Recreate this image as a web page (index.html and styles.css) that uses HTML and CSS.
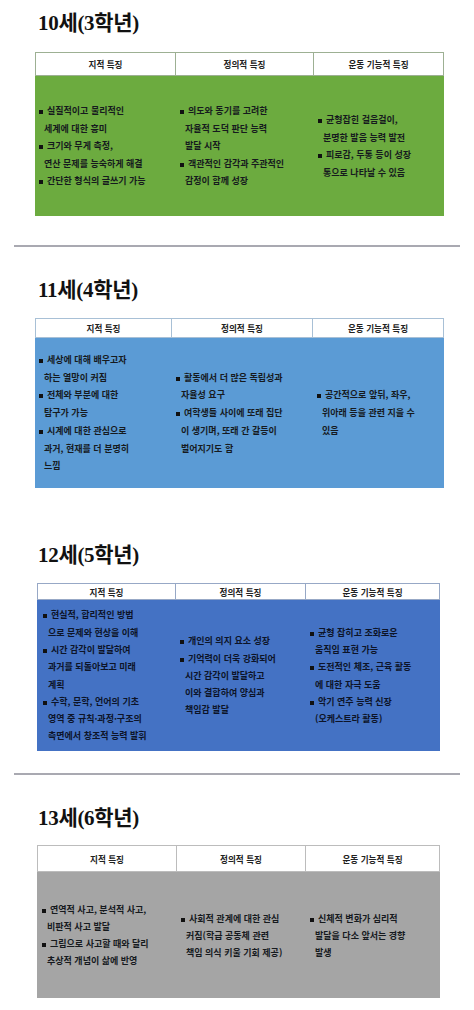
FILE: index.html
```html
<!DOCTYPE html>
<html lang="ko">
<head>
<meta charset="utf-8">
<link rel="stylesheet" href="styles.css">
</head>
<body>
<section class="sec s1">
  <h2 class="title">10세(3학년)</h2>
  <div class="tbl t1">
    <div class="hd">지적 특징</div>
    <div class="hd">정의적 특징</div>
    <div class="hd">운동 기능적 특징</div>
    <div class="cell c1">
      <p class="b">실질적이고 물리적인</p>
      <p class="c">세계에 대한 흥미</p>
      <p class="b">크기와 무게 측정,</p>
      <p class="c">연산 문제를 능숙하게 해결</p>
      <p class="b">간단한 형식의 글쓰기 가능</p>
    </div>
    <div class="cell">
      <p class="b">의도와 동기를 고려한</p>
      <p class="c">자율적 도덕 판단 능력</p>
      <p class="c">발달 시작</p>
      <p class="b">객관적인 감각과 주관적인</p>
      <p class="c">감정이 함께 성장</p>
    </div>
    <div class="cell">
      <p class="b">균형잡힌 걸음걸이,</p>
      <p class="c">분명한 발음 능력 발전</p>
      <p class="b">피로감, 두통 등이 성장</p>
      <p class="c">통으로 나타날 수 있음</p>
    </div>
  </div>
</section>
<hr class="divider d1">
<section class="sec s2">
  <h2 class="title">11세(4학년)</h2>
  <div class="tbl t2">
    <div class="hd">지적 특징</div>
    <div class="hd">정의적 특징</div>
    <div class="hd">운동 기능적 특징</div>
    <div class="cell c1">
      <p class="b">세상에 대해 배우고자</p>
      <p class="c">하는 열망이 커짐</p>
      <p class="b">전체와 부분에 대한</p>
      <p class="c">탐구가 가능</p>
      <p class="b">시계에 대한 관심으로</p>
      <p class="c">과거, 현재를 더 분명히</p>
      <p class="c">느낌</p>
    </div>
    <div class="cell">
      <p class="b">활동에서 더 많은 독립성과</p>
      <p class="c">자율성 요구</p>
      <p class="b">여학생들 사이에 또래 집단</p>
      <p class="c">이 생기며, 또래 간 갈등이</p>
      <p class="c">벌어지기도 함</p>
    </div>
    <div class="cell">
      <p class="b">공간적으로 앞뒤, 좌우,</p>
      <p class="c">위아래 등을 관련 지을 수</p>
      <p class="c">있음</p>
    </div>
  </div>
</section>
<section class="sec s3">
  <h2 class="title">12세(5학년)</h2>
  <div class="tbl t3">
    <div class="hd">지적 특징</div>
    <div class="hd">정의적 특징</div>
    <div class="hd">운동 기능적 특징</div>
    <div class="cell c1">
      <p class="b">현실적, 합리적인 방법</p>
      <p class="c">으로 문제와 현상을 이해</p>
      <p class="b">시간 감각이 발달하여</p>
      <p class="c">과거를 되돌아보고 미래</p>
      <p class="c">계획</p>
      <p class="b">수학, 문학, 언어의 기초</p>
      <p class="c">영역 중 규칙·과정·구조의</p>
      <p class="c">측면에서 창조적 능력 발휘</p>
    </div>
    <div class="cell">
      <p class="b">개인의 의지 요소 성장</p>
      <p class="b">기억력이 더욱 강화되어</p>
      <p class="c">시간 감각이 발달하고</p>
      <p class="c">이와 결합하여 양심과</p>
      <p class="c">책임감 발달</p>
    </div>
    <div class="cell">
      <p class="b">균형 잡히고 조화로운</p>
      <p class="c">움직임 표현 가능</p>
      <p class="b">도전적인 체조, 근육 활동</p>
      <p class="c">에 대한 자극 도움</p>
      <p class="b">악기 연주 능력 신장</p>
      <p class="c">(오케스트라 활동)</p>
    </div>
  </div>
</section>
<hr class="divider d2">
<section class="sec s4">
  <h2 class="title">13세(6학년)</h2>
  <div class="tbl t4">
    <div class="hd">지적 특징</div>
    <div class="hd">정의적 특징</div>
    <div class="hd">운동 기능적 특징</div>
    <div class="cell c1">
      <p class="b">연역적 사고, 분석적 사고,</p>
      <p class="c">비판적 사고 발달</p>
      <p class="b">그림으로 사고할 때와 달리</p>
      <p class="c">추상적 개념이 삶에 반영</p>
    </div>
    <div class="cell">
      <p class="b">사회적 관계에 대한 관심</p>
      <p class="c">커짐(학급 공동체 관련</p>
      <p class="c">책임 의식 키울 기회 제공)</p>
    </div>
    <div class="cell">
      <p class="b">신체적 변화가 심리적</p>
      <p class="c">발달을 다소 앞서는 경향</p>
      <p class="c">발생</p>
    </div>
  </div>
</section>
</body>
</html>
```
FILE: styles.css
```css
* { box-sizing: border-box; }
html, body { margin: 0; padding: 0; background: #ffffff; }
body {
  width: 474px;
  font-family: "Noto Sans CJK KR", "Noto Sans", sans-serif;
  color: #161a1e;
}
.title {
  margin: 0;
  padding-left: 38px;
  font-family: "Liberation Serif", "Noto Sans CJK KR", serif;
  font-weight: 700;
  font-size: 21px;
  line-height: 24px;
  height: 24px;
  color: #111;
  letter-spacing: -0.3px;
}
.s1 { padding-top: 11px; }
.s2 { padding-top: 31px; }
.s3 { padding-top: 55px; }
.s4 { padding-top: 31px; }

.tbl {
  display: grid;
  margin-top: 17px;
}
.s2 .tbl, .s3 .tbl { margin-top: 16px; }
.s4 .tbl { margin-top: 15px; }

.t1 { margin-left: 35px; width: 409px; grid-template-columns: 140px 138px 131px; grid-template-rows: 24px 140px; }
.t2 { margin-left: 35px; width: 409px; grid-template-columns: 136px 141px 132px; grid-template-rows: 20px 150px; }
.t3 { margin-left: 37px; width: 403px; grid-template-columns: 138px 130px 135px; grid-template-rows: 17px 151px; }
.t4 { margin-left: 37px; width: 403px; grid-template-columns: 139px 129px 135px; grid-template-rows: 27px 126px; }

.hd {
  background: #ffffff;
  display: flex;
  align-items: center;
  justify-content: center;
  font-size: 8.6px;
  font-weight: 700;
  color: #222;
  border: 1px solid #a9b8a4;
  margin-right: -1px;
}
.hd:nth-child(3) { margin-right: 0; }
.t1 .hd { border-color: #9db093; }
.t2 .hd { border-color: #a8c0d6; }
.t3 .hd { border-color: #97a8c6; }
.t4 .hd { border-color: #bcbcbc; }

.cell {
  display: flex;
  flex-direction: column;
  justify-content: center;
  padding-left: 5px;
  white-space: nowrap;
}
.t1 .c1, .t2 .c1 { padding-left: 4px; }
.t3 .c1 { padding-left: 6px; }
.t1 .cell { background: #6cab3f; line-height: 17.5px; }
.t2 .cell { background: #5b9bd5; line-height: 17.8px; }
.t3 .cell { background: #4472c4; line-height: 17.3px; color: #0d1428; }
.t4 .cell { background: #a5a5a5; line-height: 17px; }

.cell p {
  margin: 0;
  font-size: 9px;
  font-weight: 700;
}
.cell .b::before {
  content: "";
  display: inline-block;
  width: 4px;
  height: 4px;
  background: #111;
  margin-right: 4px;
  vertical-align: 0px;
}
.cell .c { padding-left: 5px; }

.divider {
  border: 0;
  margin: 0 0 0 14px;
  width: 446px;
  height: 2px;
  background: #a9a9b1;
}
.d1 { margin-top: 29px; }
.d2 { margin-top: 22px; }
```
